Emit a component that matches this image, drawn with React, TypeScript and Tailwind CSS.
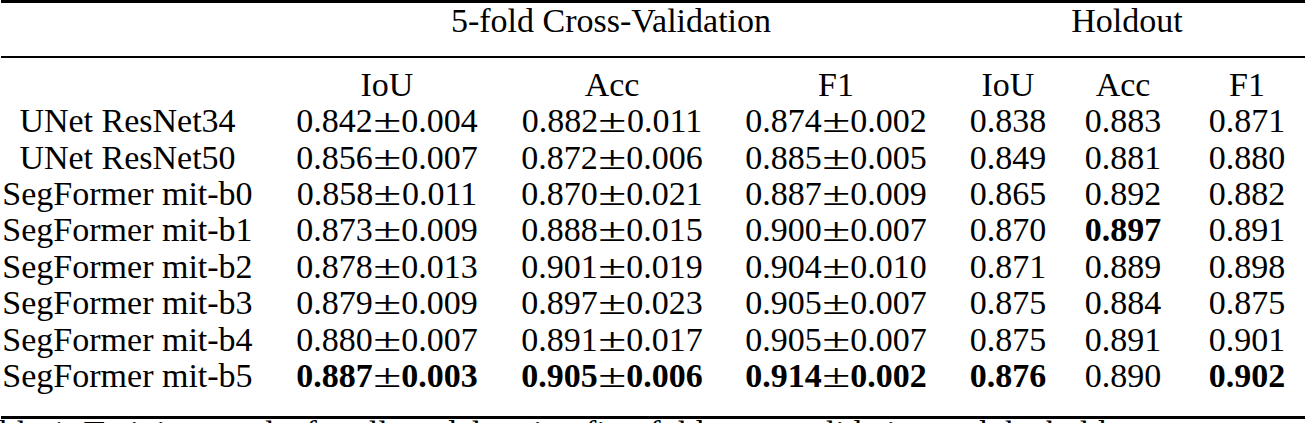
import React from 'react';

type Cell = { v: string; bold?: boolean };

const rows: { name: string; cells: Cell[] }[] = [
  {
    name: 'UNet ResNet34',
    cells: [{ v: '0.842±0.004' }, { v: '0.882±0.011' }, { v: '0.874±0.002' }, { v: '0.838' }, { v: '0.883' }, { v: '0.871' }],
  },
  {
    name: 'UNet ResNet50',
    cells: [{ v: '0.856±0.007' }, { v: '0.872±0.006' }, { v: '0.885±0.005' }, { v: '0.849' }, { v: '0.881' }, { v: '0.880' }],
  },
  {
    name: 'SegFormer mit-b0',
    cells: [{ v: '0.858±0.011' }, { v: '0.870±0.021' }, { v: '0.887±0.009' }, { v: '0.865' }, { v: '0.892' }, { v: '0.882' }],
  },
  {
    name: 'SegFormer mit-b1',
    cells: [{ v: '0.873±0.009' }, { v: '0.888±0.015' }, { v: '0.900±0.007' }, { v: '0.870' }, { v: '0.897', bold: true }, { v: '0.891' }],
  },
  {
    name: 'SegFormer mit-b2',
    cells: [{ v: '0.878±0.013' }, { v: '0.901±0.019' }, { v: '0.904±0.010' }, { v: '0.871' }, { v: '0.889' }, { v: '0.898' }],
  },
  {
    name: 'SegFormer mit-b3',
    cells: [{ v: '0.879±0.009' }, { v: '0.897±0.023' }, { v: '0.905±0.007' }, { v: '0.875' }, { v: '0.884' }, { v: '0.875' }],
  },
  {
    name: 'SegFormer mit-b4',
    cells: [{ v: '0.880±0.007' }, { v: '0.891±0.017' }, { v: '0.905±0.007' }, { v: '0.875' }, { v: '0.891' }, { v: '0.901' }],
  },
  {
    name: 'SegFormer mit-b5',
    cells: [
      { v: '0.887±0.003', bold: true },
      { v: '0.905±0.006', bold: true },
      { v: '0.914±0.002', bold: true },
      { v: '0.876', bold: true },
      { v: '0.890' },
      { v: '0.902', bold: true },
    ],
  },
];

const grid = 'grid grid-cols-[253px_266px_184px_264px_80px_150px_98px] justify-items-center';

function Value({ cell }: { cell: Cell }) {
  const [a, b] = cell.v.split('±');
  return (
    <span className={cell.bold ? 'font-bold' : ''}>
      {a}
      {b !== undefined && (
        <>
          <span className="inline-block mx-[5px] scale-x-150 font-normal">±</span>
          {b}
        </>
      )}
    </span>
  );
}

export default function App() {
  return (
    <div className="w-[1309px] h-[423px] overflow-hidden bg-white text-black font-[family-name:'Liberation_Serif','Times_New_Roman',serif] text-[34px] leading-[36.4px]">
      <div className="ml-[1px] w-[1304px]">
        <div className="h-[3px] bg-black" />

        <div className={`${grid} pt-[0.3px] pb-[16px]`}>
          <div />
          <div className="col-span-3">5-fold Cross-Validation</div>
          <div className="col-span-3 pr-[10px]">Holdout</div>
        </div>

        <div className="h-[2px] bg-black" />

        <div className="pt-[9px]">
          <div className={grid}>
            <div />
            <div>IoU</div>
            <div>Acc</div>
            <div>F1</div>
            <div>IoU</div>
            <div>Acc</div>
            <div>F1</div>
          </div>

          {rows.map((row) => (
            <div key={row.name} className={grid}>
              <div className="whitespace-nowrap">{row.name}</div>
              {row.cells.map((c, i) => (
                <div key={i} className="whitespace-nowrap">
                  <Value cell={c} />
                </div>
              ))}
            </div>
          ))}
        </div>

        <div className="mt-[22px] h-[3px] bg-black" />
      </div>

      <p className="mt-[3px] -ml-[34px] whitespace-nowrap leading-[22px]">
        Table 1: Training results for all models using five-fold cross-validation and the holdout test set.
      </p>
    </div>
  );
}
